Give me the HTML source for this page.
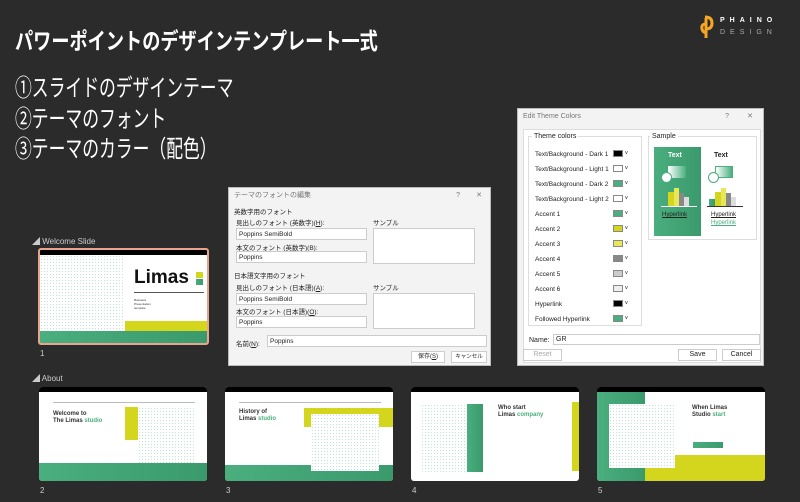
<!DOCTYPE html>
<html><head><meta charset="utf-8"><style>
*{margin:0;padding:0;box-sizing:border-box}
body{width:800px;height:502px;background:#2b2b2b;position:relative;overflow:hidden;font-family:"Liberation Sans","Noto Sans CJK JP",sans-serif;color:#fff}
.a{position:absolute}
.h1{left:15px;top:22px;font-size:23px;font-weight:bold;transform:scaleX(0.79);transform-origin:left top;white-space:nowrap}
.li{left:15px;font-size:24px;font-weight:normal;transform:scaleX(0.7);transform-origin:left top;white-space:nowrap}
.dlg{background:#f3f3f3;border:1px solid #bbb;color:#222;font-size:7px}
.tb{height:16px;line-height:16px;padding-left:5px;color:#777;font-size:7px;background:#f3f3f3}
.box{border:1px solid #ccc;background:#fff;white-space:nowrap;overflow:hidden}
.slide{background:#fff;border-radius:3px;overflow:hidden}
.dots{background-image:radial-gradient(#bfe3d3 0.6px,transparent 0.7px);background-size:3px 3px}
.g{background:linear-gradient(90deg,#4aae7e,#3a9a6c)}
.y{background:#d4d61e}
.lbl{font-size:8px;color:#ccc}
.sw{display:inline-block;width:10px;height:7px;border:1px solid #888;vertical-align:middle}
</style></head><body>
<div class="a h1">パワーポイントのデザインテンプレート一式</div>
<div class="a li" style="top:68px">①スライドのデザインテーマ</div>
<div class="a li" style="top:99px">②テーマのフォント</div>
<div class="a li" style="top:129px">③テーマのカラー（配色）</div>
<svg class="a" style="left:700px;top:15px" width="16" height="25" viewBox="0 0 16 25"><path d="M5 2 Q12 2 12 8 Q12 14 6 14 M6 3 L6 23 M6 9 Q1 9 2 14 Q3 18 6 17" stroke="#f5a623" stroke-width="3" fill="none"/></svg>
<div class="a" style="left:720px;top:17px;font-size:7px;letter-spacing:5px;font-weight:bold">PHAINO</div>
<div class="a" style="left:720px;top:29px;font-size:7px;letter-spacing:5px;color:#aaa">DESIGN</div>

<div class="a lbl" style="left:32px;top:236px">◢ Welcome Slide</div>
<div class="a slide" style="left:38px;top:248px;width:171px;height:97px;border:2px solid #e8a48f">
 <div class="a" style="left:0;top:0;width:100%;height:5px;background:#000"></div>
 <div class="a dots" style="left:0;top:5px;width:85px;height:76px"></div>
 <div class="a" style="left:94px;top:17px;font-size:19px;font-weight:bold;color:#111">Limas</div>
 <div class="a y" style="left:156px;top:22px;width:7px;height:6px"></div>
 <div class="a g" style="left:156px;top:29px;width:7px;height:6px"></div>
 <div class="a" style="left:94px;top:42px;width:70px;height:1px;background:#555"></div>
 <div class="a" style="left:94px;top:48px;font-size:3px;color:#333;line-height:4px">Business<br>Presentation<br>template</div>
 <div class="a y" style="left:85px;top:71px;width:84px;height:10px"></div>
 <div class="a g" style="left:0;top:81px;width:100%;height:14px"></div>
</div>
<div class="a lbl" style="left:40px;top:349px">1</div>

<div class="a lbl" style="left:32px;top:373px">◢ About</div>
<div class="a slide" style="left:39px;top:387px;width:168px;height:94px">
 <div class="a" style="left:0;top:0;width:100%;height:5px;background:#000"></div>
 <div class="a" style="left:14px;top:15px;width:142px;height:1px;background:#bbb"></div>
 <div class="a" style="left:14px;top:24px;font-size:6px;font-weight:bold;color:#333;line-height:7px">Welcome to<br>The Limas <span style="color:#4aae7e">studio</span></div>
 <div class="a y" style="left:86px;top:20px;width:13px;height:33px"></div>
 <div class="a dots" style="left:99px;top:20px;width:56px;height:56px"></div>
 <div class="a g" style="left:0;top:76px;width:100%;height:18px"></div>
</div>
<div class="a lbl" style="left:40px;top:486px">2</div>
<div class="a slide" style="left:225px;top:387px;width:168px;height:94px">
 <div class="a" style="left:0;top:0;width:100%;height:5px;background:#000"></div>
 <div class="a" style="left:14px;top:15px;width:142px;height:1px;background:#bbb"></div>
 <div class="a" style="left:14px;top:22px;font-size:6px;font-weight:bold;color:#333;line-height:7px">History of<br>Limas <span style="color:#4aae7e">studio</span></div>
 <div class="a y" style="left:79px;top:21px;width:89px;height:19px"></div>
 <div class="a g" style="left:0;top:78px;width:100%;height:16px"></div>
 <div class="a dots" style="left:86px;top:27px;width:68px;height:57px;background-color:#fff"></div>
</div>
<div class="a lbl" style="left:226px;top:486px">3</div>
<div class="a slide" style="left:411px;top:387px;width:168px;height:94px">
 <div class="a" style="left:0;top:0;width:100%;height:5px;background:#000"></div>
 <div class="a dots" style="left:10px;top:17px;width:46px;height:68px"></div>
 <div class="a g" style="left:56px;top:17px;width:16px;height:68px"></div>
 <div class="a" style="left:87px;top:18px;font-size:6px;font-weight:bold;color:#333;line-height:7px">Who start<br>Limas <span style="color:#4aae7e">company</span></div>
 <div class="a y" style="left:161px;top:15px;width:7px;height:69px"></div>
</div>
<div class="a lbl" style="left:412px;top:486px">4</div>
<div class="a slide" style="left:597px;top:387px;width:168px;height:94px">
 <div class="a" style="left:0;top:0;width:100%;height:5px;background:#000"></div>
 <div class="a g" style="left:0;top:5px;width:48px;height:89px"></div>
 <div class="a y" style="left:48px;top:68px;width:120px;height:26px"></div>
 <div class="a dots" style="left:12px;top:17px;width:66px;height:64px;background-color:#fff"></div>
 <div class="a" style="left:95px;top:18px;font-size:6px;font-weight:bold;color:#333;line-height:7px">When Limas<br>Studio <span style="color:#4aae7e">start</span></div>
 <div class="a g" style="left:96px;top:55px;width:30px;height:6px"></div>
</div>
<div class="a lbl" style="left:598px;top:486px">5</div>

<div class="a dlg" style="left:228px;top:187px;width:263px;height:179px;font-size:6.5px">
 <div class="tb">テーマのフォントの編集<span style="position:absolute;right:30px">?</span><span style="position:absolute;right:8px">✕</span></div>
 <div class="a" style="left:5px;top:18px">英数字用のフォント</div>
 <div class="a" style="left:7px;top:29px">見出しのフォント (英数字)(<u>H</u>):</div>
 <div class="a box" style="left:7px;top:40px;width:131px;height:12px;padding:2px">Poppins SemiBold</div>
 <div class="a" style="left:7px;top:54px">本文のフォント (英数字)(<u>B</u>):</div>
 <div class="a box" style="left:7px;top:63px;width:131px;height:12px;padding:2px">Poppins</div>
 <div class="a" style="left:144px;top:29px">サンプル</div>
 <div class="a box" style="left:144px;top:40px;width:102px;height:36px"></div>
 <div class="a" style="left:5px;top:82px">日本語文字用のフォント</div>
 <div class="a" style="left:7px;top:94px">見出しのフォント (日本語)(<u>A</u>):</div>
 <div class="a box" style="left:7px;top:105px;width:131px;height:12px;padding:2px">Poppins SemiBold</div>
 <div class="a" style="left:7px;top:118px">本文のフォント (日本語)(<u>O</u>):</div>
 <div class="a box" style="left:7px;top:128px;width:131px;height:12px;padding:2px">Poppins</div>
 <div class="a" style="left:144px;top:94px">サンプル</div>
 <div class="a box" style="left:144px;top:105px;width:102px;height:36px"></div>
 <div class="a" style="left:7px;top:150px">名前(<u>N</u>):</div>
 <div class="a box" style="left:38px;top:147px;width:220px;height:12px;padding:2px">Poppins</div>
 <div class="a box" style="left:182px;top:163px;width:34px;height:12px;text-align:center;line-height:10px;font-size:6px">保存(<u>S</u>)</div>
 <div class="a box" style="left:222px;top:163px;width:36px;height:12px;text-align:center;line-height:10px;font-size:5.5px">キャンセル</div>
</div>

<div class="a dlg" style="left:517px;top:108px;width:247px;height:258px">
 <div class="tb">Edit Theme Colors<span style="position:absolute;right:34px">?</span><span style="position:absolute;right:10px">✕</span></div>
 <div class="a" style="left:5px;top:20px;width:238px;height:234px;background:#fff;border:1px solid #ddd"></div>
 <div class="a" style="left:10px;top:27px;width:114px;height:190px;border:1px solid #ddd"></div>
 <div class="a" style="left:14px;top:24px;background:#fff;padding:0 2px">Theme colors</div>
 <div class="a" style="left:130px;top:27px;width:109px;height:104px;border:1px solid #ddd"></div>
 <div class="a" style="left:132px;top:24px;background:#fff;padding:0 2px">Sample</div>
 <div class="a g" style="left:136px;top:38px;width:47px;height:89px"></div>
 <div class="a" style="left:150px;top:43px;font-weight:bold;color:#fff;font-size:7px">Text</div>
 <div class="a" style="left:196px;top:43px;font-weight:bold;font-size:7px">Text</div>
 <div class="a" style="left:150px;top:57px;width:18px;height:12px;background:linear-gradient(90deg,#fff,#4aae7e);border-radius:1px"></div>
 <div class="a" style="left:143px;top:63px;width:11px;height:11px;border-radius:50%;background:#fff;border:1px solid #4aae7e"></div>
 <div class="a" style="left:197px;top:57px;width:18px;height:12px;background:linear-gradient(90deg,#fff,#4aae7e);border:1px solid #4aae7e"></div>
 <div class="a" style="left:190px;top:63px;width:11px;height:11px;border-radius:50%;background:#fff;border:1px solid #4aae7e"></div>
 <div class="a" style="left:143px;top:97px;width:36px;height:1px;background:#fff"></div>
 <div class="a" style="left:189px;top:97px;width:36px;height:1px;background:#333"></div>
 <div class="a" style="left:144px;top:103px;font-size:6px;text-decoration:underline">Hyperlink</div>
 <div class="a" style="left:193px;top:103px;font-size:6px;text-decoration:underline">Hyperlink</div>
 <div class="a" style="left:193px;top:111px;font-size:6px;text-decoration:underline;color:#4aae7e">Hyperlink</div>
 <div class="a y" style="left:150px;top:83px;width:6px;height:14px"></div>
 <div class="a" style="left:156px;top:79px;width:5px;height:18px;background:#e6e85a"></div>
 <div class="a" style="left:161px;top:84px;width:5px;height:13px;background:#888"></div>
 <div class="a" style="left:166px;top:88px;width:5px;height:9px;background:#ddd"></div>
 <div class="a g" style="left:191px;top:90px;width:6px;height:7px"></div>
 <div class="a" style="left:197px;top:83px;width:6px;height:14px;background:#d4d61e"></div>
 <div class="a" style="left:203px;top:79px;width:5px;height:18px;background:#e6e85a"></div>
 <div class="a" style="left:208px;top:84px;width:5px;height:13px;background:#888"></div>
 <div class="a" style="left:213px;top:88px;width:5px;height:9px;background:#ddd"></div>
 <div style="position:absolute;left:17px;top:38px;line-height:15px;font-size:6.5px">
 <div>Text/Background - Dark 1</div><div>Text/Background - Light 1</div><div>Text/Background - Dark 2</div><div>Text/Background - Light 2</div>
 <div>Accent 1</div><div>Accent 2</div><div>Accent 3</div><div>Accent 4</div><div>Accent 5</div><div>Accent 6</div><div>Hyperlink</div><div>Followed Hyperlink</div></div>
 <div style="position:absolute;left:95px;top:38px;line-height:15px;font-size:6px">
 <div><span class="sw" style="background:#000"></span> ˅</div>
 <div><span class="sw" style="background:#fff"></span> ˅</div>
 <div><span class="sw" style="background:#4aae7e"></span> ˅</div>
 <div><span class="sw" style="background:#fff"></span> ˅</div>
 <div><span class="sw" style="background:#4aae7e"></span> ˅</div>
 <div><span class="sw" style="background:#d4d61e"></span> ˅</div>
 <div><span class="sw" style="background:#e6e85a"></span> ˅</div>
 <div><span class="sw" style="background:#888"></span> ˅</div>
 <div><span class="sw" style="background:#ccc"></span> ˅</div>
 <div><span class="sw" style="background:#eee"></span> ˅</div>
 <div><span class="sw" style="background:#000"></span> ˅</div>
 <div><span class="sw" style="background:#4aae7e"></span> ˅</div>
 </div>
 <div class="a" style="left:11px;top:228px">Name:</div>
 <div class="a box" style="left:35px;top:225px;width:207px;height:11px;padding:1px 2px">GR</div>
 <div class="a box" style="left:5px;top:240px;width:39px;height:12px;text-align:center;line-height:10px;color:#aaa">Reset</div>
 <div class="a box" style="left:160px;top:240px;width:39px;height:12px;text-align:center;line-height:10px">Save</div>
 <div class="a box" style="left:204px;top:240px;width:39px;height:12px;text-align:center;line-height:10px">Cancel</div>
</div>
</body></html>
